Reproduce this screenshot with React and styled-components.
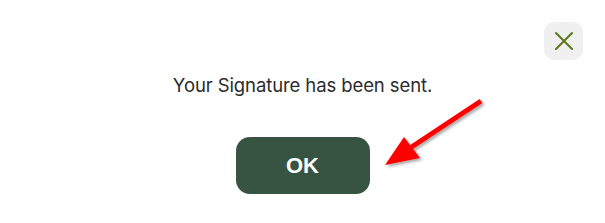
import styled, { createGlobalStyle } from "styled-components";

const GlobalStyle = createGlobalStyle`
  html, body {
    margin: 0;
    padding: 0;
    background: #ffffff;
  }
  body {
    font-family: "Inter", "Liberation Sans", sans-serif;
  }
`;

const Modal = styled.div`
  position: relative;
  width: 605px;
  height: 223px;
  box-sizing: border-box;
  padding: 22px 22px 0;
  display: flex;
  flex-direction: column;
  align-items: center;
  background: #fff;
`;

const Header = styled.div`
  align-self: stretch;
  display: flex;
  justify-content: flex-end;
`;

const CloseButton = styled.button`
  width: 39px;
  height: 38px;
  border: none;
  border-radius: 10px;
  background: #f0f0f0;
  display: grid;
  place-items: center;
  padding: 0;
  cursor: pointer;
`;

const Message = styled.p`
  margin: 14px 0 0;
  font-size: 18.5px;
  line-height: 22px;
  color: #2b2b2b;
  letter-spacing: -0.1px;
`;

const OkButton = styled.button`
  margin-top: 41px;
  width: 134px;
  height: 57px;
  border: none;
  border-radius: 14px;
  background: #375341;
  color: #fff;
  font-family: "Liberation Sans", Arial, sans-serif;
  font-weight: 700;
  font-size: 22px;
  cursor: pointer;
`;

const Annotation = styled.svg`
  position: absolute;
  left: 0;
  top: 0;
  pointer-events: none;
`;

export default function App() {
  return (
    <>
      <GlobalStyle />
      <Modal>
        <Header>
          <CloseButton aria-label="Close">
            <svg width="20" height="20" viewBox="0 0 20 20">
              <path d="M2 2 L18 18 M18 2 L2 18" stroke="#5b7a1c" strokeWidth="2" strokeLinecap="round" />
            </svg>
          </CloseButton>
        </Header>
        <Message>Your Signature has been sent.</Message>
        <OkButton>OK</OkButton>
        <Annotation width="605" height="223" viewBox="0 0 605 223">
          <defs>
            <filter id="sh" x="-20%" y="-20%" width="140%" height="140%">
              <feDropShadow dx="2" dy="2" stdDeviation="1.5" floodColor="#000" floodOpacity="0.35" />
            </filter>
          </defs>
          <g filter="url(#sh)">
            <line x1="481" y1="101" x2="410" y2="148" stroke="#ff0000" strokeWidth="5" />
            <polygon points="385,165 404,137 420,158" fill="#ff0000" />
          </g>
        </Annotation>
      </Modal>
    </>
  );
}
